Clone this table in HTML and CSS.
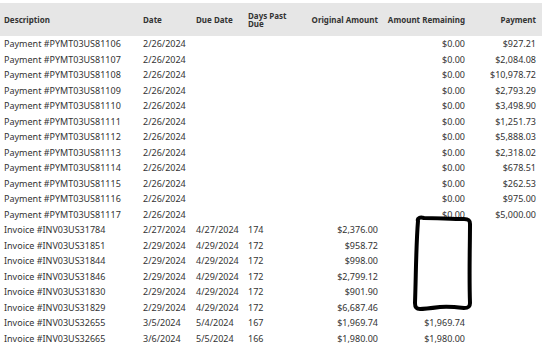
FILE: index.html
```html
<!DOCTYPE html>
<html>

<head>
    <title>Account Activity</title>
    <link rel="stylesheet" href="styles.css">
</head>

<body>
    <div class="sheet">
        <table class="activity">
            <colgroup>
                <col class="c-desc">
                <col class="c-date">
                <col class="c-due">
                <col class="c-days">
                <col class="c-orig">
                <col class="c-rem">
                <col class="c-pay">
            </colgroup>
            <thead>
                <tr>
                    <th>Description</th>
                    <th>Date</th>
                    <th>Due Date</th>
                    <th class="wrap">Days Past Due</th>
                    <th class="num">Original Amount</th>
                    <th class="num">Amount Remaining</th>
                    <th class="num">Payment</th>
                </tr>
            </thead>
            <tbody>
                <tr><td>Payment #PYMT03US81106</td><td>2/26/2024</td><td></td><td></td><td class="num"></td><td class="num">$0.00</td><td class="num">$927.21</td></tr>
                <tr><td>Payment #PYMT03US81107</td><td>2/26/2024</td><td></td><td></td><td class="num"></td><td class="num">$0.00</td><td class="num">$2,084.08</td></tr>
                <tr><td>Payment #PYMT03US81108</td><td>2/26/2024</td><td></td><td></td><td class="num"></td><td class="num">$0.00</td><td class="num">$10,978.72</td></tr>
                <tr><td>Payment #PYMT03US81109</td><td>2/26/2024</td><td></td><td></td><td class="num"></td><td class="num">$0.00</td><td class="num">$2,793.29</td></tr>
                <tr><td>Payment #PYMT03US81110</td><td>2/26/2024</td><td></td><td></td><td class="num"></td><td class="num">$0.00</td><td class="num">$3,498.90</td></tr>
                <tr><td>Payment #PYMT03US81111</td><td>2/26/2024</td><td></td><td></td><td class="num"></td><td class="num">$0.00</td><td class="num">$1,251.73</td></tr>
                <tr><td>Payment #PYMT03US81112</td><td>2/26/2024</td><td></td><td></td><td class="num"></td><td class="num">$0.00</td><td class="num">$5,888.03</td></tr>
                <tr><td>Payment #PYMT03US81113</td><td>2/26/2024</td><td></td><td></td><td class="num"></td><td class="num">$0.00</td><td class="num">$2,318.02</td></tr>
                <tr><td>Payment #PYMT03US81114</td><td>2/26/2024</td><td></td><td></td><td class="num"></td><td class="num">$0.00</td><td class="num">$678.51</td></tr>
                <tr><td>Payment #PYMT03US81115</td><td>2/26/2024</td><td></td><td></td><td class="num"></td><td class="num">$0.00</td><td class="num">$262.53</td></tr>
                <tr><td>Payment #PYMT03US81116</td><td>2/26/2024</td><td></td><td></td><td class="num"></td><td class="num">$0.00</td><td class="num">$975.00</td></tr>
                <tr><td>Payment #PYMT03US81117</td><td>2/26/2024</td><td></td><td></td><td class="num"></td><td class="num">$0.00</td><td class="num">$5,000.00</td></tr>
                <tr><td>Invoice #INV03US31784</td><td>2/27/2024</td><td>4/27/2024</td><td>174</td><td class="num">$2,376.00</td><td class="num"></td><td class="num"></td></tr>
                <tr><td>Invoice #INV03US31851</td><td>2/29/2024</td><td>4/29/2024</td><td>172</td><td class="num">$958.72</td><td class="num"></td><td class="num"></td></tr>
                <tr><td>Invoice #INV03US31844</td><td>2/29/2024</td><td>4/29/2024</td><td>172</td><td class="num">$998.00</td><td class="num"></td><td class="num"></td></tr>
                <tr><td>Invoice #INV03US31846</td><td>2/29/2024</td><td>4/29/2024</td><td>172</td><td class="num">$2,799.12</td><td class="num"></td><td class="num"></td></tr>
                <tr><td>Invoice #INV03US31830</td><td>2/29/2024</td><td>4/29/2024</td><td>172</td><td class="num">$901.90</td><td class="num"></td><td class="num"></td></tr>
                <tr><td>Invoice #INV03US31829</td><td>2/29/2024</td><td>4/29/2024</td><td>172</td><td class="num">$6,687.46</td><td class="num"></td><td class="num"></td></tr>
                <tr><td>Invoice #INV03US32655</td><td>3/5/2024</td><td>5/4/2024</td><td>167</td><td class="num">$1,969.74</td><td class="num">$1,969.74</td><td class="num"></td></tr>
                <tr><td>Invoice #INV03US32665</td><td>3/6/2024</td><td>5/5/2024</td><td>166</td><td class="num">$1,980.00</td><td class="num">$1,980.00</td><td class="num"></td></tr>
            </tbody>
        </table>

        <!-- hand-drawn markup over the remaining amounts -->
        <svg class="scribble" width="64" height="100" viewBox="0 0 64 100">
            <path d="M6 6 C5 3 8 2 12 3 C24 3 40 4 52 4 C56 4 58 5 58 9 C58 30 57 60 58 88 C58 92 56 93 52 93 C44 92 36 91 28 92 C20 93 12 94 8 94 C4 94 3 92 3 88 C4 60 4 30 6 6 Z"
                fill="none" stroke="#000" stroke-width="4" stroke-linejoin="round" stroke-linecap="round" />
        </svg>
    </div>
</body>

</html>
```

FILE: styles.css
```css
body {
    margin: 0;
    padding: 0;
    background-color: #ffffff;
    font-family: "Noto Sans", "Open Sans", sans-serif;
    color: #333333;
}

.sheet {
    position: relative;
    padding-top: 3px;
}

.activity {
    width: 542px;
    table-layout: fixed;
    border-collapse: collapse;
    font-size: 9px;
}

.c-desc { width: 139px; }
.c-date { width: 53px; }
.c-due { width: 52px; }
.c-days { width: 56px; }
.c-orig { width: 82px; }
.c-rem { width: 87px; }
.c-pay { width: 73px; }

.activity thead tr {
    background-color: #e6e6e6;
    height: 33px;
}

.activity th {
    font-size: 8px;
    font-weight: bold;
    text-align: left;
    padding: 0 4px;
    line-height: 8px;
    vertical-align: middle;
    white-space: nowrap;
}

.activity th.wrap {
    white-space: normal;
    padding-right: 8px;
}

.activity td {
    height: 15.5px;
    padding: 0 4px;
    line-height: 15px;
    white-space: nowrap;
    vertical-align: middle;
}

.activity .num {
    text-align: right;
}

.activity th:last-child,
.activity td:last-child {
    padding-right: 6px;
}

.scribble {
    position: absolute;
    left: 412px;
    top: 215px;
}
```
